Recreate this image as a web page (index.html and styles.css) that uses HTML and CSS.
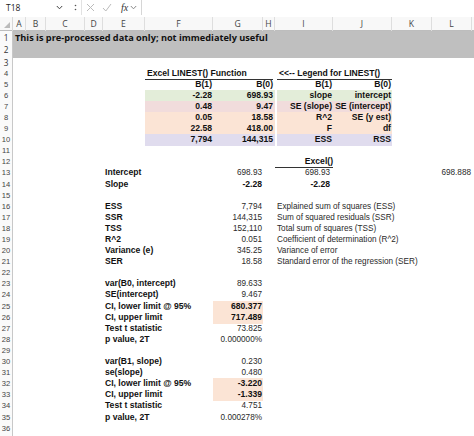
FILE: index.html
```html
<!DOCTYPE html>
<html>
<head>
<meta charset="utf-8">
<link rel="stylesheet" href="styles.css">
</head>
<body>
<div class="fbar">
  <div class="namebox"><span class="ref">T18</span>
    <svg class="chev" width="7" height="5" viewBox="0 0 7 5"><path d="M0.8 1 L3.5 3.8 L6.2 1" fill="none" stroke="#444" stroke-width="1"/></svg>
  </div>
  <svg class="dots" width="3" height="9" viewBox="0 0 3 9"><circle cx="1.5" cy="2.5" r="0.8" fill="#555"/><circle cx="1.5" cy="6.5" r="0.8" fill="#555"/></svg>
  <div class="fbtns">
    <svg width="9" height="9" viewBox="0 0 9 9"><path d="M1 1 L8 8 M8 1 L1 8" stroke="#bbb" stroke-width="1"/></svg>
    <svg width="10" height="9" viewBox="0 0 10 9"><path d="M1 5 L3.8 8 L9 1" fill="none" stroke="#bbb" stroke-width="1"/></svg>
    <span class="fx">fx</span>
    <svg class="chev2" width="7" height="5" viewBox="0 0 7 5"><path d="M0.8 1 L3.5 3.8 L6.2 1" fill="none" stroke="#888" stroke-width="1"/></svg>
  </div>
  <div class="finput"></div>
</div>

<div class="sheet">
  <div class="row hdr">
    <div class="corner"><svg width="8" height="8" viewBox="0 0 8 8"><path d="M7 1 L7 7 L1 7 Z" fill="#bbb"/></svg></div>
    <div class="ch">A</div><div class="ch">B</div><div class="ch">C</div><div class="ch">D</div><div class="ch">E</div><div class="ch">F</div><div class="ch">G</div><div class="ch">H</div><div class="ch">I</div><div class="ch">J</div><div class="ch">K</div><div class="ch">L</div><div class="ch last"></div>
  </div>

  <div class="row r1"><div class="rh big">1</div><div class="band"><span class="title">This is pre-processed data only; not immediately useful</span></div></div>
  <div class="row r2"><div class="rh big">2</div><div class="band"></div></div>
  <div class="row"><div class="rh big">3</div></div>

  <div class="row"><div class="rh">4</div>
    <div class="c b cF u2">Excel LINEST() Function</div>
    <div class="c b cI u2l">&lt;&lt;-- Legend for LINEST()</div>
  </div>
  <div class="row"><div class="rh">5</div>
    <div class="c b r cF">B(1)</div><div class="c b r cGH">B(0)</div>
    <div class="c b r cI">B(1)</div><div class="c b r cJ">B(0)</div>
  </div>
  <div class="row"><div class="rh">6</div>
    <div class="c b r cF green">-2.28</div><div class="c b r cGH green">698.93</div>
    <div class="c b r cI green gapl">slope</div><div class="c b r cJ green">intercept</div>
  </div>
  <div class="row"><div class="rh">7</div>
    <div class="c b r cF pink">0.48</div><div class="c b r cGH pink">9.47</div>
    <div class="c b r cI pink gapl">SE (slope)</div><div class="c b r cJ pink">SE (intercept)</div>
  </div>
  <div class="row"><div class="rh">8</div>
    <div class="c b r cF peach">0.05</div><div class="c b r cGH peach">18.58</div>
    <div class="c b r cI peach gapl">R^2</div><div class="c b r cJ peach">SE (y est)</div>
  </div>
  <div class="row"><div class="rh">9</div>
    <div class="c b r cF peach">22.58</div><div class="c b r cGH peach">418.00</div>
    <div class="c b r cI peach gapl">F</div><div class="c b r cJ peach">df</div>
  </div>
  <div class="row"><div class="rh">10</div>
    <div class="c b r cF lav">7,794</div><div class="c b r cGH lav">144,315</div>
    <div class="c b r cI lav gapl">ESS</div><div class="c b r cJ lav">RSS</div>
  </div>
  <div class="row"><div class="rh">11</div></div>
  <div class="row"><div class="rh">12</div>
    <div class="c b r cI u1">Excel()</div>
  </div>
  <div class="row"><div class="rh">13</div>
    <div class="c b cE">Intercept</div><div class="c n r cG">698.93</div>
    <div class="c n r cI2">698.93</div><div class="c n r cL">698.888</div>
  </div>
  <div class="row"><div class="rh">14</div>
    <div class="c b cE">Slope</div><div class="c b r cG">-2.28</div>
    <div class="c b r cI2">-2.28</div>
  </div>
  <div class="row"><div class="rh">15</div></div>
  <div class="row"><div class="rh">16</div>
    <div class="c b cE">ESS</div><div class="c n r cG">7,794</div><div class="c n cI">Explained sum of squares (ESS)</div>
  </div>
  <div class="row"><div class="rh">17</div>
    <div class="c b cE">SSR</div><div class="c n r cG">144,315</div><div class="c n cI">Sum of squared residuals (SSR)</div>
  </div>
  <div class="row"><div class="rh">18</div>
    <div class="c b cE">TSS</div><div class="c n r cG">152,110</div><div class="c n cI">Total sum of squares (TSS)</div>
  </div>
  <div class="row"><div class="rh">19</div>
    <div class="c b cE">R^2</div><div class="c n r cG">0.051</div><div class="c n cI">Coefficient of determination (R^2)</div>
  </div>
  <div class="row"><div class="rh">20</div>
    <div class="c b cE">Variance (e)</div><div class="c n r cG">345.25</div><div class="c n cI">Variance of error</div>
  </div>
  <div class="row"><div class="rh">21</div>
    <div class="c b cE">SER</div><div class="c n r cG">18.58</div><div class="c n cI">Standard error of the regression (SER)</div>
  </div>
  <div class="row"><div class="rh">22</div></div>
  <div class="row"><div class="rh">23</div>
    <div class="c b cE">var(B0, intercept)</div><div class="c n r cG">89.633</div>
  </div>
  <div class="row"><div class="rh">24</div>
    <div class="c b cE">SE(intercept)</div><div class="c n r cG">9.467</div>
  </div>
  <div class="row"><div class="rh">25</div>
    <div class="c b cE">CI, lower limit @ 95%</div><div class="c b r cG peach">680.377</div>
  </div>
  <div class="row"><div class="rh">26</div>
    <div class="c b cE">CI, upper limit</div><div class="c b r cG peach">717.489</div>
  </div>
  <div class="row"><div class="rh">27</div>
    <div class="c b cE">Test t statistic</div><div class="c n r cG">73.825</div>
  </div>
  <div class="row"><div class="rh">28</div>
    <div class="c b cE">p value, 2T</div><div class="c n r cG">0.000000%</div>
  </div>
  <div class="row"><div class="rh">29</div></div>
  <div class="row"><div class="rh">30</div>
    <div class="c b cE">var(B1, slope)</div><div class="c n r cG">0.230</div>
  </div>
  <div class="row"><div class="rh">31</div>
    <div class="c b cE">se(slope)</div><div class="c n r cG">0.480</div>
  </div>
  <div class="row"><div class="rh">32</div>
    <div class="c b cE">CI, lower limit @ 95%</div><div class="c b r cG peach">-3.220</div>
  </div>
  <div class="row"><div class="rh">33</div>
    <div class="c b cE">CI, upper limit</div><div class="c b r cG peach">-1.339</div>
  </div>
  <div class="row"><div class="rh">34</div>
    <div class="c b cE">Test t statistic</div><div class="c n r cG">4.751</div>
  </div>
  <div class="row"><div class="rh">35</div>
    <div class="c b cE">p value, 2T</div><div class="c n r cG">0.000278%</div>
  </div>
  <div class="row"><div class="rh">36</div></div>
  <div class="row"><div class="rh"></div></div>
</div>
</body>
</html>
```
FILE: styles.css
```css
html, body {
  margin: 0;
  padding: 0;
  background: #fff;
}
body {
  width: 474px;
  height: 436px;
  overflow: hidden;
  font-family: "Liberation Sans", Arial, sans-serif;
  color: #000;
}

/* formula bar */
.fbar {
  display: flex;
  align-items: center;
  height: 15px;
  margin-bottom: 2px;
  font-family: "Open Sans", "Noto Sans", sans-serif;
}
.namebox {
  width: 68px;
  height: 15px;
  display: flex;
  align-items: center;
  justify-content: space-between;
  padding: 0 5px 0 6px;
  box-sizing: border-box;
}
.ref {
  font-size: 8.5px;
  color: #222;
}
.dots {
  margin: 0 4px 0 6px;
}
.fbtns {
  display: flex;
  align-items: center;
  gap: 7px;
  height: 15px;
  padding-left: 4px;
  border-left: 1px solid #e2e2e2;
  width: 54px;
}
.fx {
  font-family: "Liberation Serif", serif;
  font-style: italic;
  font-size: 10px;
  color: #333;
  margin-left: 2px;
  margin-right: -5px;
}
.finput {
  flex: 1;
  height: 15px;
  border-left: 1px solid #d6d6d6;
  margin-left: 1px;
}

/* sheet grid */
.sheet {
  display: flex;
  flex-direction: column;
}
.row {
  display: grid;
  grid-template-columns: 13px 13px 20px 39px 18px 42px 68px 50px 12px 58px 59px 40px 40px 1fr;
  height: 11.1px;
  font-size: 8.2px;
  line-height: 11.1px;
}
.row.hdr {
  height: 14px;
  line-height: 14px;
  background: #f8f8f8;
  border-bottom: 1px solid #bdbdbd;
  box-sizing: border-box;
  font-family: "Open Sans", "Noto Sans", sans-serif;
  font-size: 8.6px;
  color: #444;
}
.corner {
  display: flex;
  align-items: flex-end;
  justify-content: flex-end;
  padding: 0 1px 2px 0;
  border-right: 1px solid #d8d8d8;
}
.ch {
  text-align: center;
  border-right: 1px solid #dedede;
}
.ch.last {
  border-right: none;
}
.row.r1 {
  height: 13px;
  line-height: 13px;
}
.row.r2 {
  height: 12.5px;
  line-height: 12.5px;
}
.rh {
  grid-column: 1;
  text-align: center;
  color: #444;
  font-size: 7.6px;
  background: #fafafa;
  border-right: 1px solid #c8c8c8;
  border-bottom: 1px solid #e0e0e0;
  box-sizing: border-box;
}
.rh.big {
  font-family: "Open Sans", "Noto Sans", sans-serif;
  font-size: 8.2px;
  color: #333;
}
.band {
  grid-column: 2 / -1;
  background: #bfbfbf;
}
.title {
  font-family: "Open Sans", "Noto Sans", sans-serif;
  font-weight: 700;
  font-size: 9.2px;
  padding-left: 2px;
  white-space: nowrap;
  color: #111;
}

/* cells */
.c {
  white-space: nowrap;
  padding: 0 1px 0 2px;
  box-sizing: border-box;
}
.b {
  font-weight: 700;
  font-size: 8.6px;
  color: #111;
}
.n {
  color: #2a2a2a;
}
.r {
  text-align: right;
}
.r.c {
  display: flex;
  justify-content: flex-end;
}
.cE { grid-column: 6; }
.cF { grid-column: 7; }
.cG { grid-column: 8; }
.cGH { grid-column: 8 / span 2; padding-right: 2px; }
.cI { grid-column: 10; }
.cI2 { grid-column: 10; padding-right: 3px; }
.cJ { grid-column: 11; }
.cL { grid-column: 13; }
.u2 {
  grid-column: 7 / span 3;
  border-bottom: 1px solid #333;
  margin-right: 2px;
}
.u2l {
  grid-column: 10 / span 2;
  border-bottom: 1px solid #333;
  margin-left: 2px;
}
.u1 {
  border-bottom: 1px solid #333;
  padding-right: 0;
}
.gapl {
  margin-left: 2px;
}
.green { background: #e3edd9; }
.pink { background: #f1dcdc; }
.peach { background: #fbe4d5; }
.lav { background: #e0dcee; }
```
